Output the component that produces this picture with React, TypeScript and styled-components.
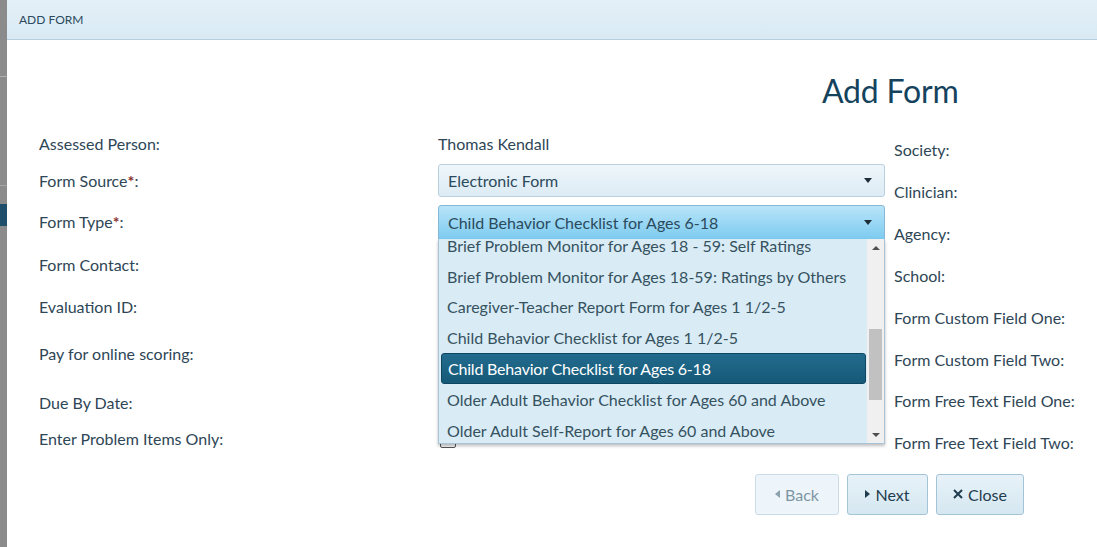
import React from 'react'
import styled, { createGlobalStyle, css } from 'styled-components'

const GlobalStyle = createGlobalStyle`
    html, body {
        margin: 0;
        padding: 0;
        height: 100%;
        overflow: hidden;
    }
    body {
        font-family: 'Lato', 'Noto Sans', 'DejaVu Sans', sans-serif;
        color: #2e4656;
        background: #8e8e8e;
    }
`

const Page = styled.div`
    display: flex;
    height: 547px;
    width: 1097px;
    overflow: hidden;
`

const Backdrop = styled.div`
    width: 7px;
    flex: none;
    background: #8b8b8b;
    display: flex;
    flex-direction: column;
`

const BackdropMark = styled.div<{ h: number; color: string; mt: number }>`
    height: ${({ h }) => h}px;
    margin-top: ${({ mt }) => mt}px;
    background: ${({ color }) => color};
`

const Dialog = styled.div`
    flex: 1;
    background: #ffffff;
    display: flex;
    flex-direction: column;
    min-width: 0;
`

const Header = styled.div`
    height: 39px;
    flex: none;
    display: flex;
    align-items: center;
    padding-left: 12px;
    font-size: 12px;
    color: #2b4a5e;
    background: linear-gradient(#e4f0f7, #d9eaf4);
    border-bottom: 1px solid #b6cfe0;
`

const TitleBar = styled.div`
    height: 86px;
    display: flex;
    align-items: center;
    padding-left: 815px;
    padding-top: 14px;
    box-sizing: border-box;
`

const Title = styled.h1`
    margin: 0;
    font-size: 32px;
    font-weight: 400;
    letter-spacing: -0.2px;
    color: #15435d;
`

const FormArea = styled.div`
    display: flex;
    padding-left: 32px;
`

const MainGrid = styled.div`
    display: grid;
    grid-template-columns: 399px 447px;
    grid-template-rows: 35px 38px 44px 42px 42px 52px 46px 26px;
`

const Cell = styled.div`
    display: flex;
    align-items: center;
    font-size: 16px;
    position: relative;
`

const Required = styled.span`
    color: #8a2e2e;
    font-weight: 700;
`

const SideColumn = styled.div`
    margin-left: 9px;
    padding-top: 3px;
    display: flex;
    flex-direction: column;
`

const SideLabel = styled.div`
    height: 41.85px;
    display: flex;
    align-items: center;
    font-size: 16px;
    white-space: nowrap;
`

const Select = styled.div<{ open?: boolean }>`
    width: 100%;
    box-sizing: border-box;
    display: flex;
    align-items: center;
    justify-content: space-between;
    padding: 0 12px 0 9px;
    border-radius: 3px;
    font-size: 16px;
    color: #2b4a5c;
    ${({ open }) =>
        open
            ? css`
                  height: 35px;
                  margin-top: 2px;
                  background: linear-gradient(#b9e4f9, #7ccbf0);
                  border: 1px solid #86b8d6;
                  border-bottom-left-radius: 0;
                  border-bottom-right-radius: 0;
              `
            : css`
                  height: 33px;
                  background: linear-gradient(#eef6fa, #dcebf4);
                  border: 1px solid #b9d0df;
              `}
`

const Caret = styled.span`
    width: 0;
    height: 0;
    border-left: 4px solid transparent;
    border-right: 4px solid transparent;
    border-top: 5px solid #1e2e38;
`

const Checkbox = styled.div`
    width: 14px;
    height: 14px;
    margin-left: 2px;
    margin-top: 3px;
    border: 1px solid #555;
    border-radius: 2px;
    background: #f3f3f3;
`

const Dropdown = styled.div`
    position: absolute;
    z-index: 5;
    top: 40px;
    left: 0;
    width: 447px;
    height: 205px;
    box-sizing: border-box;
    display: flex;
    background: #d9ebf5;
    border: 1px solid #a8c3d5;
    border-top: none;
    box-shadow: 0 2px 3px rgba(0, 0, 0, 0.25);
    overflow: hidden;
`

const OptionList = styled.div`
    flex: 1;
    overflow: hidden;
    padding: 0 1px 0 2px;
`

const OptionStack = styled.div`
    margin-top: -9px;
`

const Option = styled.div<{ selected?: boolean }>`
    height: 30.8px;
    box-sizing: border-box;
    display: flex;
    align-items: center;
    padding-left: 6px;
    font-size: 16px;
    white-space: nowrap;
    color: #35525f;
    ${({ selected }) =>
        selected &&
        css`
            color: #ffffff;
            background: linear-gradient(#236b8e, #155977);
            border: 1px solid #0f4762;
            border-radius: 3px;
            letter-spacing: -0.2px;
        `}
`

const ScrollBar = styled.div`
    width: 17px;
    flex: none;
    background: #f0f0f0;
    display: flex;
    flex-direction: column;
    align-items: center;
`

const ScrollArrow = styled.div<{ up?: boolean }>`
    height: 17px;
    width: 100%;
    display: flex;
    align-items: center;
    justify-content: center;
    &::after {
        content: '';
        width: 0;
        height: 0;
        border-left: 4px solid transparent;
        border-right: 4px solid transparent;
        ${({ up }) =>
            up ? 'border-bottom: 4px solid #505050;' : 'border-top: 4px solid #505050;'}
    }
`

const ScrollTrack = styled.div`
    flex: 1;
    width: 100%;
    display: flex;
    justify-content: center;
`

const ScrollThumb = styled.div`
    width: 13px;
    height: 71px;
    margin-top: 73px;
    background: #c1c1c1;
`

const ButtonBar = styled.div`
    display: flex;
    gap: 8px;
    padding-left: 748px;
    margin-top: 10px;
`

const Button = styled.button<{ width: number; disabled?: boolean }>`
    width: ${({ width }) => width}px;
    height: 41px;
    display: flex;
    align-items: center;
    justify-content: center;
    gap: 5px;
    border-radius: 3px;
    font-family: inherit;
    font-size: 16px;
    padding: 0;
    ${({ disabled }) =>
        disabled
            ? css`
                  color: #7d95a3;
                  background: #edf5fa;
                  border: 1px solid #c9dde9;
              `
            : css`
                  color: #1f3c4e;
                  background: linear-gradient(#e7f2f8, #d5e7f1);
                  border: 1px solid #a3c3d6;
              `}
`

const Tri = styled.span<{ dir: 'left' | 'right'; color: string }>`
    width: 0;
    height: 0;
    border-top: 4px solid transparent;
    border-bottom: 4px solid transparent;
    ${({ dir, color }) =>
        dir === 'left'
            ? `border-right: 5px solid ${color};`
            : `border-left: 5px solid ${color};`}
`

const CloseIcon = styled.svg`
    width: 10px;
    height: 10px;
`

const formTypes = [
    'Brief Problem Monitor for Ages 18 - 59: Self Ratings',
    'Brief Problem Monitor for Ages 18-59: Ratings by Others',
    'Caregiver-Teacher Report Form for Ages 1 1/2-5',
    'Child Behavior Checklist for Ages 1 1/2-5',
    'Child Behavior Checklist for Ages 6-18',
    'Older Adult Behavior Checklist for Ages 60 and Above',
    'Older Adult Self-Report for Ages 60 and Above',
]

const sideLabels = [
    'Society:',
    'Clinician:',
    'Agency:',
    'School:',
    'Form Custom Field One:',
    'Form Custom Field Two:',
    'Form Free Text Field One:',
    'Form Free Text Field Two:',
]

const selectedType = 'Child Behavior Checklist for Ages 6-18'

export default function App() {
    return (
        <>
            <GlobalStyle />
            <Page>
                <Backdrop>
                    <BackdropMark h={1} mt={76} color="#b0b0b0" />
                    <BackdropMark h={1} mt={108} color="#a5a5a5" />
                    <BackdropMark h={22} mt={18} color="#1f4e6b" />
                </Backdrop>
                <Dialog>
                    <Header>ADD FORM</Header>
                    <TitleBar>
                        <Title>Add Form</Title>
                    </TitleBar>
                    <FormArea>
                        <MainGrid>
                            <Cell>Assessed Person:</Cell>
                            <Cell>Thomas Kendall</Cell>

                            <Cell>
                                Form Source<Required>*</Required>:
                            </Cell>
                            <Cell>
                                <Select>
                                    Electronic Form
                                    <Caret />
                                </Select>
                            </Cell>

                            <Cell>
                                Form Type<Required>*</Required>:
                            </Cell>
                            <Cell>
                                <Select open>
                                    {selectedType}
                                    <Caret />
                                </Select>
                                <Dropdown>
                                    <OptionList>
                                        <OptionStack>
                                            {formTypes.map((t) => (
                                                <Option key={t} selected={t === selectedType}>
                                                    {t}
                                                </Option>
                                            ))}
                                        </OptionStack>
                                    </OptionList>
                                    <ScrollBar>
                                        <ScrollArrow up />
                                        <ScrollTrack>
                                            <ScrollThumb />
                                        </ScrollTrack>
                                        <ScrollArrow />
                                    </ScrollBar>
                                </Dropdown>
                            </Cell>

                            <Cell>Form Contact:</Cell>
                            <Cell />

                            <Cell>Evaluation ID:</Cell>
                            <Cell />

                            <Cell>Pay for online scoring:</Cell>
                            <Cell />

                            <Cell>Due By Date:</Cell>
                            <Cell />

                            <Cell>Enter Problem Items Only:</Cell>
                            <Cell>
                                <Checkbox />
                            </Cell>
                        </MainGrid>
                        <SideColumn>
                            {sideLabels.map((l) => (
                                <SideLabel key={l}>{l}</SideLabel>
                            ))}
                        </SideColumn>
                    </FormArea>
                    <ButtonBar>
                        <Button width={84} disabled>
                            <Tri dir="left" color="#8aa1ae" />
                            Back
                        </Button>
                        <Button width={81}>
                            <Tri dir="right" color="#1f3c4e" />
                            Next
                        </Button>
                        <Button width={88}>
                            <CloseIcon viewBox="0 0 10 10">
                                <path d="M1 1 L9 9 M9 1 L1 9" stroke="#1f3c4e" strokeWidth="2" />
                            </CloseIcon>
                            Close
                        </Button>
                    </ButtonBar>
                </Dialog>
            </Page>
        </>
    )
}
